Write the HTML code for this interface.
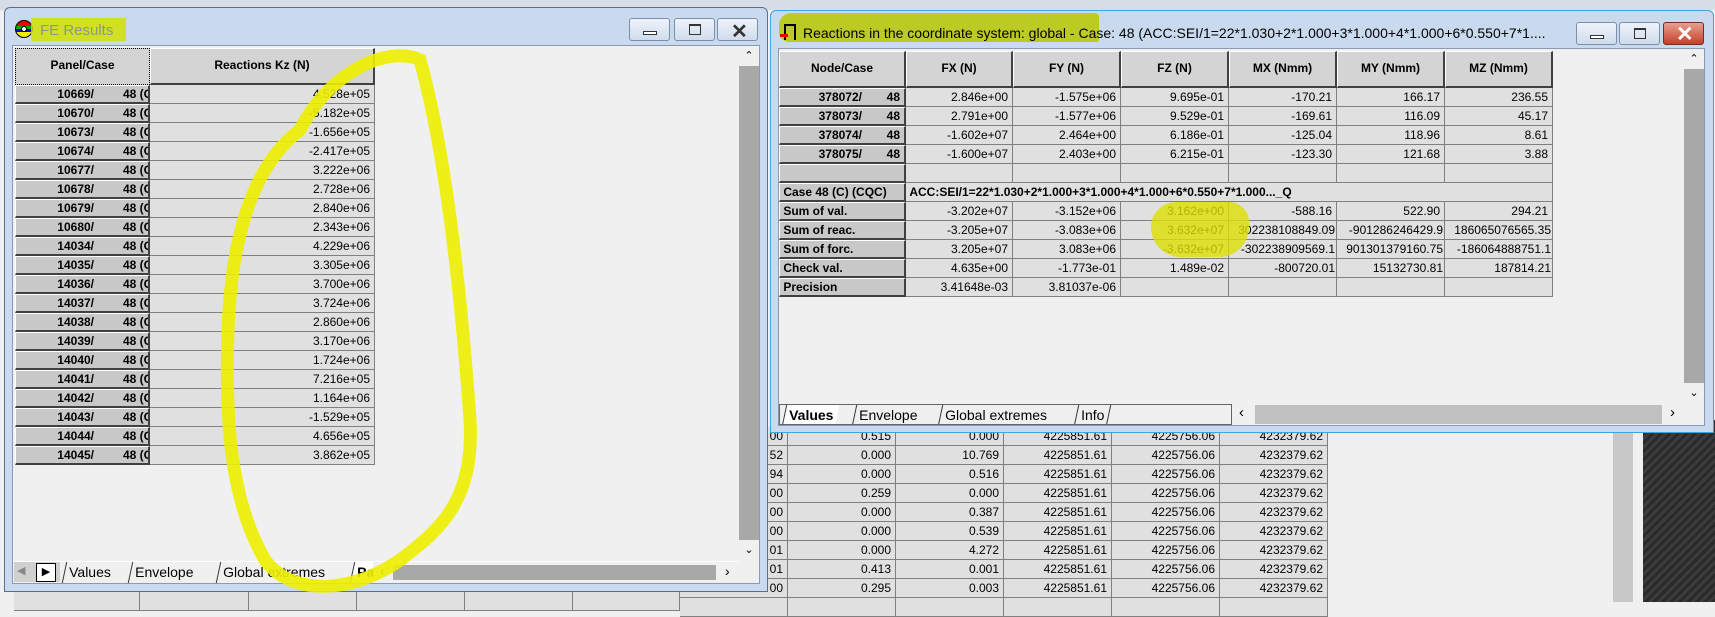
<!DOCTYPE html>
<html><head><meta charset="utf-8"><style>
*{margin:0;padding:0;box-sizing:border-box}
body{width:1715px;height:602px;overflow:hidden;background:#f0f0f0;position:relative;font-family:"Liberation Sans",Arial,sans-serif;font-size:12px;color:#000}
.a{position:absolute}
.c{position:absolute;background:#e0e0e0;border-right:1px solid #808080;border-bottom:1px solid #808080;text-align:right;padding-right:4px;line-height:18px;white-space:nowrap;overflow:hidden}
.h{position:absolute;background:#c8c8c8;border:1px solid #fff;border-right:2px solid #404040;border-bottom:2px solid #404040;font-weight:bold;line-height:16px;white-space:nowrap;overflow:hidden}
.hd{position:absolute;background:#d4d4d4;border:1px solid #fff;border-right:2px solid #404040;border-bottom:2px solid #404040;font-weight:bold;text-align:center;white-space:nowrap}
.win{position:absolute;background:#c9daee;border:1px solid #5a6f8a;border-radius:6px 6px 0 0}
.btn{position:absolute;width:41px;height:23px;border:1px solid #7c8ea8;border-radius:3px;background:linear-gradient(#eef3fa,#cfdcec)}
.cl{background:linear-gradient(#e8a08f,#c4402a);border-color:#7a2a20}
.tab{position:absolute;top:0;height:21px;line-height:20px;font-size:14px;border-left:1px solid #333;padding:0 4px;transform:skewX(-12deg)}
.tab span{display:inline-block;transform:skewX(12deg)}
</style></head><body>
<div class="a" style="left:0;top:0;width:1715px;height:10px;background:#d6dde6"></div>
<div class="a" style="left:1613px;top:420px;width:20px;height:182px;background:#c8c8c8"></div>
<div class="a" style="left:1643px;top:420px;width:72px;height:182px;background:repeating-linear-gradient(135deg,#3c3c3c 0 3px,#2a2a2a 3px 6px)"></div>
<div id="bg" class="a" style="left:0;top:0;width:1715px;height:602px"></div>

<!-- left window -->
<div class="win" style="left:4px;top:7px;width:764px;height:585px"></div>
<div class="a" style="left:15px;top:20px;width:18px;height:18px;border-radius:50%;background:radial-gradient(circle,#fff 0 2px,#000 2px 3px,transparent 3px),linear-gradient(#e00 0 30%,#0a0 30% 50%,#00d 50% 70%,#ee0 70%);border:1px solid #000"></div>
<div class="a" style="left:31px;top:18px;width:95px;height:23px;background:#d4e000;opacity:.85"></div>
<div class="a" style="left:40px;top:22px;font-size:15px;color:#8a9a80">FE Results</div>
<div class="btn" style="left:629px;top:18px"><div class="a" style="left:13px;top:12px;width:14px;height:4px;border:1px solid #333;background:#fff"></div></div>
<div class="btn" style="left:674px;top:18px"><div class="a" style="left:14px;top:5px;width:12px;height:11px;border:1px solid #333;border-top-width:2px"></div></div>
<div class="btn" style="left:717px;top:18px"><div class="a" style="left:13px;top:0;font-size:20px;font-weight:bold;color:#333">✕</div></div>
<div class="a" style="left:12px;top:45px;width:748px;height:539px;background:#f0f0f0;border:1px solid #8a9ab0"></div>
<div class="a" style="left:739px;top:46px;width:20px;height:514px;background:#a8a8a8"></div>
<div class="a" style="left:739px;top:46px;width:20px;height:20px;background:#f0f0f0;text-align:center;line-height:20px;font-size:11px">&#8963;</div>
<div class="a" style="left:739px;top:540px;width:20px;height:20px;background:#f0f0f0;text-align:center;line-height:20px;font-size:11px">&#8964;</div>
<div class="hd" style="left:15px;top:48px;width:135px;height:37px;line-height:33px;border:1px dotted #000">Panel/Case</div>
<div class="hd" style="left:150px;top:48px;width:225px;height:37px;line-height:33px">Reactions Kz (N)</div>
<div id="lt" class="a" style="left:0;top:0"></div>
<div class="a" style="left:13px;top:561px;width:726px;height:22px;background:#f0f0f0;border-top:1px solid #fff"></div>
<div class="a" style="left:14px;top:562px;width:46px;height:20px;background:#d0d0d0"></div>
<div class="a" style="left:17px;top:564px;font-size:11px;color:#888">◀</div>
<div class="a" style="left:36px;top:563px;width:20px;height:19px;border:1px solid #000;background:#fff;font-size:11px;text-align:center;line-height:17px">▶</div>
<div class="a" style="left:60px;top:562px;width:313px;height:21px;overflow:hidden">
<div class="tab" style="left:4px"><span>Values</span></div><div class="tab" style="left:70px"><span>Envelope</span></div><div class="tab" style="left:158px"><span>Global extremes</span></div><div class="tab" style="left:292px;font-weight:bold;background:#fff"><span>Pa</span></div></div>
<div class="a" style="left:373px;top:562px;width:366px;height:21px;background:#f0f0f0"></div>
<div class="a" style="left:393px;top:565px;width:323px;height:15px;background:#a8a8a8"></div>
<div class="a" style="left:380px;top:563px;font-size:14px">‹</div><div class="a" style="left:725px;top:563px;font-size:14px">›</div>

<!-- right window -->
<div class="win" style="left:770px;top:10px;width:944px;height:423px;border-color:#39a8d8"></div>
<div class="a" style="left:779px;top:13px;width:320px;height:29px;background:#b8c800;opacity:.85;border-radius:12px 4px 2px 10px"></div>
<div class="a" style="left:784px;top:24px;width:12px;height:16px;border:2px solid #000;border-bottom:none"></div>
<div class="a" style="left:780px;top:34px;width:8px;height:3px;background:#e00"></div>
<div class="a" style="left:803px;top:25px;width:768px;overflow:hidden;font-size:14px;white-space:nowrap">Reactions in the coordinate system: global - Case: 48 (ACC:SEI/1=22*1.030+2*1.000+3*1.000+4*1.000+6*0.550+7*1....</div>
<div class="btn" style="left:1576px;top:22px"><div class="a" style="left:13px;top:12px;width:14px;height:4px;border:1px solid #333;background:#fff"></div></div>
<div class="btn" style="left:1619px;top:22px"><div class="a" style="left:14px;top:5px;width:12px;height:11px;border:1px solid #333;border-top-width:2px"></div></div>
<div class="btn cl" style="left:1663px;top:22px"><div class="a" style="left:12px;top:-1px;font-size:21px;font-weight:bold;color:#fff">✕</div></div>
<div class="a" style="left:778px;top:48px;width:927px;height:378px;background:#f0f0f0;border:1px solid #8a9ab0"></div>
<div class="a" style="left:1684px;top:49px;width:20px;height:354px;background:#a8a8a8"></div>
<div class="a" style="left:1684px;top:49px;width:20px;height:20px;background:#f0f0f0;text-align:center;line-height:20px;font-size:11px">&#8963;</div>
<div class="a" style="left:1684px;top:383px;width:20px;height:20px;background:#f0f0f0;text-align:center;line-height:20px;font-size:11px">&#8964;</div>
<div id="rt" class="a" style="left:0;top:0"></div>
<div class="a" style="left:779px;top:404px;width:453px;height:21px;background:#f0f0f0;border:1px solid #666;overflow:hidden">
<div class="tab" style="left:4px;background:#fff;font-weight:bold"><span>Values</span></div><div class="tab" style="left:74px"><span>Envelope</span></div><div class="tab" style="left:160px"><span>Global extremes</span></div><div class="tab" style="left:296px;border-right:1px solid #333"><span>Info</span></div></div>
<div class="a" style="left:1234px;top:404px;width:450px;height:21px;background:#f0f0f0"></div>
<div class="a" style="left:1255px;top:405px;width:407px;height:19px;background:#c0c0c0"></div>
<div class="a" style="left:1239px;top:404px;font-size:15px">‹</div><div class="a" style="left:1670px;top:404px;font-size:15px">›</div>

<!-- highlights -->
<div class="a" style="left:1151px;top:202px;width:98px;height:55px;background:#dede00;opacity:.8;border-radius:25px 20px 30px 30px"></div>
<svg class="a" style="left:0;top:0" width="1715" height="602"><path d="M300 130 C330 70,390 45,420 60 C445 150,460 280,470 420 C475 500,440 530,400 560 C350 595,290 595,265 560 C230 500,225 420,228 330 C232 220,260 160,300 130 Z" fill="none" stroke="#eeee00" stroke-width="13" opacity=".9"/></svg>

<script>
function cell(p,x,y,w,h,t,cls,st){var d=document.createElement('div');d.className=cls||'c';d.style.cssText='left:'+x+'px;top:'+y+'px;width:'+w+'px;height:'+h+'px;'+(st||'');d.innerHTML=t;document.getElementById(p).appendChild(d);}
var bx=[680,788,896,1004,1112,1220,1328];
var bd=[["00","0.515","0.000"],["52","0.000","10.769"],["94","0.000","0.516"],["00","0.259","0.000"],["00","0.000","0.387"],["00","0.000","0.539"],["01","0.000","4.272"],["01","0.413","0.001"],["00","0.295","0.003"],["","",""]];
for(var r=0;r<10;r++){var y=427+r*19;var v=bd[r].concat(r<9?["4225851.61","4225756.06","4232379.62"]:["","",""]);
for(var i=0;i<6;i++)cell('bg',bx[i],y,bx[i+1]-bx[i],19,v[i]);}
for(var i=0;i<6;i++)cell('bg',[14,140,249,357,465,573][i],592,[126,109,108,108,108,107][i],19,"");
var lt=[["10669","4.528e+05"],["10670","-5.182e+05"],["10673","-1.656e+05"],["10674","-2.417e+05"],["10677","3.222e+06"],["10678","2.728e+06"],["10679","2.840e+06"],["10680","2.343e+06"],["14034","4.229e+06"],["14035","3.305e+06"],["14036","3.700e+06"],["14037","3.724e+06"],["14038","2.860e+06"],["14039","3.170e+06"],["14040","1.724e+06"],["14041","7.216e+05"],["14042","1.164e+06"],["14043","-1.529e+05"],["14044","4.656e+05"],["14045","3.862e+05"]];
for(var r=0;r<20;r++){var y=85+r*19;cell('lt',15,y,135,19,'<span style="position:absolute;right:54px">'+lt[r][0]+'/</span><span style="position:absolute;left:107px">48 (C</span>','h');cell('lt',150,y,225,19,lt[r][1]);}
var rx=[779,906,1013,1121,1229,1337,1445,1553];
var hh=["Node/Case","FX (N)","FY (N)","FZ (N)","MX (Nmm)","MY (Nmm)","MZ (Nmm)"];
for(var i=0;i<7;i++)cell('rt',rx[i],51,rx[i+1]-rx[i],37,hh[i],'hd','line-height:33px');
var rd=[["378072/","2.846e+00","-1.575e+06","9.695e-01","-170.21","166.17","236.55"],["378073/","2.791e+00","-1.577e+06","9.529e-01","-169.61","116.09","45.17"],["378074/","-1.602e+07","2.464e+00","6.186e-01","-125.04","118.96","8.61"],["378075/","-1.600e+07","2.403e+00","6.215e-01","-123.30","121.68","3.88"],["","","","","","",""],null,
["Sum of val.","-3.202e+07","-3.152e+06","3.162e+00","-588.16","522.90","294.21"],["Sum of reac.","-3.205e+07","-3.083e+06","3.632e+07","302238108849.09","-901286246429.9","186065076565.35"],["Sum of forc.","3.205e+07","3.083e+06","-3.632e+07","-302238909569.1","901301379160.75","-186064888751.1"],["Check val.","4.635e+00","-1.773e-01","1.489e-02","-800720.01","15132730.81","187814.21"],["Precision","3.41648e-03","3.81037e-06","","","",""]];
for(var r=0;r<11;r++){var y=88+r*19;var d=rd[r];
if(!d){cell('rt',rx[0],y,127,19,'&nbsp;Case 48 (C) (CQC)','h');cell('rt',rx[1],y,647,19,'&nbsp;ACC:SEI/1=22*1.030+2*1.000+3*1.000+4*1.000+6*0.550+7*1.000..._Q','c','text-align:left;font-weight:bold;padding:0');continue;}
if(r<4)cell('rt',rx[0],y,127,19,'<span style="position:absolute;right:42px">'+d[0]+'</span><span style="position:absolute;right:4px">48</span>','h');
else cell('rt',rx[0],y,127,19,'&nbsp;'+d[0],'h');
for(var i=1;i<7;i++)cell('rt',rx[i],y,rx[i+1]-rx[i],19,d[i],'c',(r>=7&&i>=4)?'padding-right:1px':'');}
</script>
</body></html>
